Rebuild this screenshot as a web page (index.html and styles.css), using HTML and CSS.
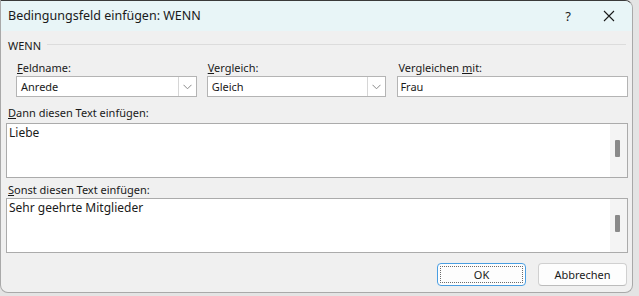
FILE: index.html
```html
<!DOCTYPE html>
<html lang="de">
<head>
  <meta charset="UTF-8" />
  <title>Bedingungsfeld einfügen: WENN</title>
  <link rel="stylesheet" href="styles.css">
</head>
<body>

  <div class="dialog">
    <!-- Title bar -->
    <div class="titlebar">
      <span class="title">Bedingungsfeld einfügen: WENN</span>
      <span class="help">?</span>
      <svg class="close" width="12" height="12" viewBox="0 0 12 12">
        <path d="M1 1 L11 11 M11 1 L1 11" stroke="#1a1a1a" stroke-width="1.1" fill="none" />
      </svg>
    </div>

    <div class="content">
      <div class="group-head">
        <span>WENN</span>
        <div class="group-line"></div>
      </div>

      <div class="fields">
        <div class="field field-name">
          <label><u>F</u>eldname:</label>
          <div class="combo">
            <span class="combo-value">Anrede</span>
            <span class="combo-arrow">
              <svg width="9" height="6" viewBox="0 0 9 6"><path d="M0.5 0.8 L4.5 4.8 L8.5 0.8" stroke="#8a8a8a" fill="none" /></svg>
            </span>
          </div>
        </div>
        <div class="field field-cmp">
          <label><u>V</u>ergleich:</label>
          <div class="combo">
            <span class="combo-value">Gleich</span>
            <span class="combo-arrow">
              <svg width="9" height="6" viewBox="0 0 9 6"><path d="M0.5 0.8 L4.5 4.8 L8.5 0.8" stroke="#8a8a8a" fill="none" /></svg>
            </span>
          </div>
        </div>
        <div class="field field-with">
          <label>Vergleichen <u>m</u>it:</label>
          <div class="textbox">Frau</div>
        </div>
      </div>

      <label class="area-label"><u>D</u>ann diesen Text einfügen:</label>
      <div class="textarea">
        <div class="area-text">Liebe</div>
        <div class="scrollbar"><div class="thumb"></div></div>
      </div>

      <label class="area-label second"><u>S</u>onst diesen Text einfügen:</label>
      <div class="textarea">
        <div class="area-text">Sehr geehrte Mitglieder</div>
        <div class="scrollbar"><div class="thumb"></div></div>
      </div>

      <div class="buttons">
        <button class="btn btn-ok"><span class="focus">OK</span></button>
        <button class="btn">Abbrechen</button>
      </div>
    </div>
  </div>

</body>
</html>
```
FILE: styles.css
```css
body {
  margin: 0;
  padding: 0;
  background-color: #e4e4e4;
  font-family: "Noto Sans", "Open Sans", sans-serif;
  color: #1a1a1a;
}

.dialog {
  width: 633px;
  height: 293px;
  box-sizing: border-box;
  border: 1px solid #a9a9a9;
  border-top: 1px solid #3a3a3a;
  border-radius: 0 8px 8px 8px;
  background: #f0f0f0;
  overflow: hidden;
}

.titlebar {
  height: 30px;
  background: #e8f5f7;
  display: flex;
  align-items: center;
  padding-left: 7px;
}

.title {
  font-size: 12.5px;
  flex: 1;
  margin-top: -1px;
}

.help {
  font-size: 13px;
  margin-right: 32px;
}

.close {
  margin-right: 17px;
}

.content {
  padding: 0 4px 0 5px;
}

.group-head {
  display: flex;
  align-items: center;
  height: 14px;
  margin-top: 7px;
  font-size: 11px;
  padding-left: 2px;
}

.group-line {
  flex: 1;
  height: 1px;
  background: #dcdcdc;
  margin-left: 6px;
  margin-right: 2px;
  margin-top: -1px;
}

.fields {
  display: flex;
  margin-top: 8px;
  padding-left: 10px;
}

.field label {
  display: block;
  font-size: 11px;
  height: 15px;
  padding-left: 1px;
}

.field-name { width: 181px; margin-right: 10px; }
.field-cmp { width: 180px; margin-right: 11px; }
.field-with { width: 231px; }

.combo, .textbox {
  height: 21px;
  box-sizing: border-box;
  border: 1px solid #b4b4b4;
  background: #fff;
  display: flex;
  align-items: center;
  font-size: 11px;
  margin-top: 1px;
}

.combo-value {
  flex: 1;
  padding-left: 4px;
}

.textbox {
  padding-left: 2px;
}

.combo-arrow {
  width: 17px;
  height: 100%;
  border-left: 1px solid #d6d6d6;
  display: flex;
  align-items: center;
  justify-content: center;
}

.area-label {
  display: block;
  font-size: 11px;
  height: 15px;
  margin-top: 8px;
  padding-left: 2px;
}

.area-label.second {
  margin-top: 4px;
}

.textarea {
  height: 55px;
  box-sizing: border-box;
  border: 1px solid #ababab;
  background: #fff;
  display: flex;
  margin-top: 3px;
}

.textarea + .area-label + .textarea {
  margin-top: 1px;
}

.area-text {
  flex: 1;
  font-size: 12px;
  padding: 0 0 0 2px;
}

.scrollbar {
  width: 17px;
  background: #f4f4f4;
  padding-top: 16px;
  box-sizing: border-box;
}

.thumb {
  width: 5px;
  height: 17px;
  margin-left: 5px;
  background: #8a8a8a;
  border-radius: 1px;
}

.buttons {
  display: flex;
  justify-content: flex-end;
  margin-top: 10px;
  padding-right: 1px;
}

.btn {
  width: 89px;
  height: 23px;
  box-sizing: border-box;
  border: 1px solid #d0d0d0;
  border-bottom-color: #bcbcbc;
  border-radius: 4px;
  background: #fdfdfd;
  font-family: "Noto Sans", "Open Sans", sans-serif;
  font-size: 11px;
  color: #1a1a1a;
  padding: 0;
  margin-left: 12px;
}

.btn-ok {
  border: 1px solid #4a9ee2;
  padding: 2px;
}

.focus {
  display: flex;
  height: 100%;
  align-items: center;
  justify-content: center;
  box-sizing: border-box;
  border: 1px dotted #6b6b6b;
}
```
